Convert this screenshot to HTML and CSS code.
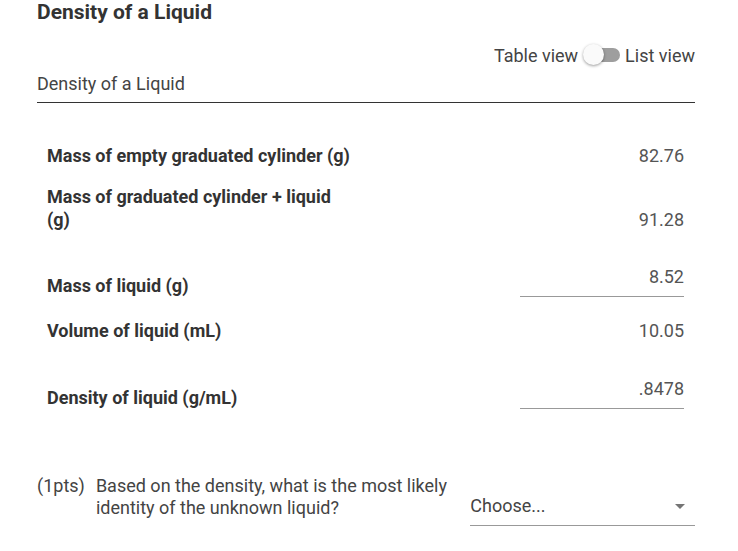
FILE: index.html
```html
<!DOCTYPE html>
<html lang="en">
<head>
<meta charset="utf-8">
<title>Density of a Liquid</title>
<link rel="stylesheet" href="styles.css">
</head>
<body>
<div class="page">
  <h1 class="title">Density of a Liquid</h1>
  <div class="view-toggle">
    <span>Table view</span>
    <span class="switch"><span class="track"></span><span class="knob"></span></span>
    <span>List view</span>
  </div>
  <div class="subtitle">Density of a Liquid</div>

  <div class="table">
    <div class="row">
      <div class="label">Mass of empty graduated cylinder (g)</div>
      <div class="value">82.76</div>
    </div>
    <div class="row">
      <div class="label">Mass of graduated cylinder + liquid (g)</div>
      <div class="value">91.28</div>
    </div>
    <div class="row">
      <div class="label">Mass of liquid (g)</div>
      <div class="value input">8.52</div>
    </div>
    <div class="row">
      <div class="label">Volume of liquid (mL)</div>
      <div class="value">10.05</div>
    </div>
    <div class="row">
      <div class="label">Density of liquid (g/mL)</div>
      <div class="value input tall">.8478</div>
    </div>
  </div>

  <div class="question">
    <div class="pts">(1pts)</div>
    <div class="qtext">Based on the density, what is the most likely identity of the unknown liquid?</div>
    <div class="select">
      <span>Choose...</span>
      <svg class="arrow" width="10" height="5" viewBox="0 0 10 5"><path d="M0 0 L10 0 L5 5 Z" fill="#757575"/></svg>
    </div>
  </div>
</div>
</body>
</html>
```
FILE: styles.css
```css
html, body {
  margin: 0;
  padding: 0;
  background: #fff;
}
body {
  font-family: Roboto, "Liberation Sans", sans-serif;
  color: #333;
}
.page {
  width: 658px;
  padding: 0 0 0 37px;
}
.title {
  margin: 0;
  padding-top: 0;
  font-size: 21px;
  line-height: 24px;
  font-weight: 700;
  color: #333;
}
.view-toggle {
  display: flex;
  justify-content: flex-end;
  align-items: center;
  margin-top: 20px;
  height: 22px;
  font-size: 18px;
  color: #444;
}
.switch {
  position: relative;
  width: 38px;
  height: 22px;
  margin: 0 4px 0 5px;
}
.track {
  position: absolute;
  left: 5px;
  top: 4px;
  width: 32px;
  height: 14px;
  border-radius: 7px;
  background: #9e9e9e;
}
.knob {
  position: absolute;
  left: 0;
  top: 0;
  width: 21px;
  height: 21px;
  border-radius: 50%;
  background: #fafafa;
  box-shadow: 0 1px 3px rgba(0,0,0,0.4);
}
.subtitle {
  margin-top: 7px;
  font-size: 18px;
  line-height: 22px;
  padding-bottom: 7px;
  border-bottom: 1px solid #333;
  color: #444;
}
.table {
  padding: 28px 11px 0 10px;
}
.row {
  display: flex;
  justify-content: space-between;
  align-items: flex-end;
  padding: 9px 0;
}
.label {
  width: 305px;
  font-size: 18px;
  line-height: 23px;
  font-weight: 700;
  color: #333;
}
.value {
  font-size: 18px;
  line-height: 23px;
  padding-top: 4px;
  color: #555;
  text-align: right;
}
.value.input {
  width: 164px;
  height: 48px;
  box-sizing: border-box;
  padding: 0 0 8px;
  display: flex;
  align-items: flex-end;
  justify-content: flex-end;
  border-bottom: 1px solid #999;
}
.value.input.tall {
  height: 49px;
}
.question {
  display: flex;
  align-items: flex-start;
  margin-top: 57px;
  font-size: 18px;
  line-height: 22px;
  color: #444;
}
.pts {
  width: 59px;
}
.qtext {
  width: 365px;
}
.select {
  margin-left: 10px;
  width: 225px;
  height: 42px;
  box-sizing: border-box;
  margin-top: 9px;
  padding: 11px 10px 0 0;
  display: flex;
  justify-content: space-between;
  align-items: flex-start;
  border-bottom: 1px solid #999;
  color: #444;
}
.arrow {
  margin-top: 9px;
}
```
